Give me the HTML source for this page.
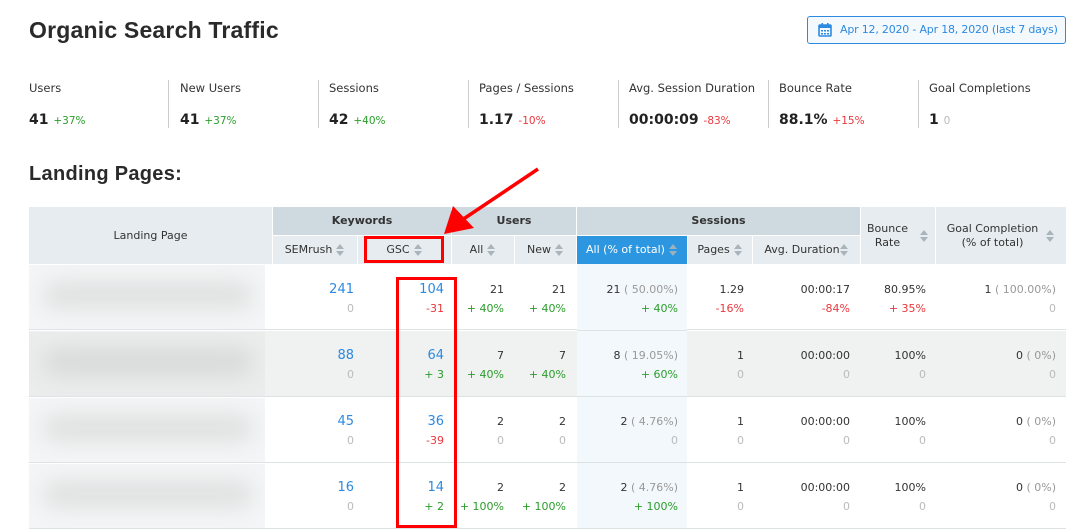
<!DOCTYPE html>
<html><head><meta charset="utf-8"><style>
*{margin:0;padding:0;box-sizing:border-box}
body{width:1076px;height:532px;background:#fff;font-family:"DejaVu Sans","Liberation Sans",sans-serif;color:#333;position:relative;overflow:hidden}
.a{position:absolute}
h1{position:absolute;left:29px;top:17px;font-family:"Liberation Sans",sans-serif;font-size:23px;font-weight:bold;color:#2a2a2a;letter-spacing:0.2px}
.btn{left:807px;top:16px;width:259px;height:28px;border:1px solid #2d8ae0;border-radius:3px;background:#f4f9fe;color:#2d8ae0;font-size:11px;line-height:26px;padding-left:32px;white-space:nowrap;letter-spacing:-0.2px}
.m{top:81px;height:47px;font-size:11.5px;color:#333}
.m .v{position:absolute;top:31px;font-size:14px;font-weight:bold;white-space:nowrap;color:#222}
.m .v span{font-size:10.5px;font-weight:normal}
.sep{top:80px;width:1px;height:48px;background:#ccc}
.g{color:#2a9d2a}.r{color:#e8383d}.z{color:#bbb}.b{color:#2d8ae0}
h2{position:absolute;left:29px;top:163px;font-family:"Liberation Sans",sans-serif;font-size:20px;font-weight:bold;color:#2a2a2a;letter-spacing:0.3px}
.h{background:#e6ecef;font-size:11px;color:#333;display:flex;align-items:center;justify-content:center;text-align:center;line-height:14px}
.h2{background:#cfd9e0;font-weight:bold}
.s{display:inline-block;width:9px;height:12px;margin-left:4px;vertical-align:middle;position:relative}
.s:before,.s:after{content:"";position:absolute;left:0;border-left:4.5px solid transparent;border-right:4.5px solid transparent}
.s:before{top:0;border-bottom:5px solid #a9b4bb}.s:after{bottom:0;border-top:5px solid #a9b4bb}
.row{left:29px;width:1037px;height:66px;border-bottom:1px solid #dde2e5}
.c{font-size:11px;text-align:right;line-height:19px}
.blur{left:29px;width:236px;height:64px;background:#f4f5f6;overflow:hidden}
.blur i{position:absolute;left:14px;top:16px;width:210px;height:28px;background:#e0e1e1;border-radius:14px;filter:blur(10px)}
</style></head><body>
<h1>Organic Search Traffic</h1>
<div class="a btn"><svg class="a" style="left:10px;top:6px" width="14" height="14" viewBox="0 0 14 14"><rect x="1" y="2" width="12" height="11" rx="1" fill="none" stroke="#2d8ae0" stroke-width="1.6"/><rect x="1" y="2" width="12" height="3" fill="#2d8ae0"/><rect x="3.5" y="0" width="1.6" height="3" fill="#2d8ae0"/><rect x="9" y="0" width="1.6" height="3" fill="#2d8ae0"/><g fill="#2d8ae0"><rect x="3" y="7" width="2" height="1.5"/><rect x="6" y="7" width="2" height="1.5"/><rect x="9" y="7" width="2" height="1.5"/><rect x="3" y="10" width="2" height="1.5"/><rect x="6" y="10" width="2" height="1.5"/><rect x="9" y="10" width="2" height="1.5"/></g></svg>Apr 12, 2020 - Apr 18, 2020 (last 7 days)</div>

<div class="a m" style="left:29px">Users<div class="v">41 <span class="g">+37%</span></div></div>
<div class="a sep" style="left:168px"></div>
<div class="a m" style="left:180px">New Users<div class="v">41 <span class="g">+37%</span></div></div>
<div class="a sep" style="left:318px"></div>
<div class="a m" style="left:329px">Sessions<div class="v">42 <span class="g">+40%</span></div></div>
<div class="a sep" style="left:468px"></div>
<div class="a m" style="left:479px">Pages / Sessions<div class="v">1.17 <span class="r">-10%</span></div></div>
<div class="a sep" style="left:618px"></div>
<div class="a m" style="left:629px">Avg. Session Duration<div class="v">00:00:09 <span class="r">-83%</span></div></div>
<div class="a sep" style="left:768px"></div>
<div class="a m" style="left:779px">Bounce Rate<div class="v">88.1% <span class="r">+15%</span></div></div>
<div class="a sep" style="left:918px"></div>
<div class="a m" style="left:929px">Goal Completions<div class="v">1 <span class="z">0</span></div></div>

<h2>Landing Pages:</h2>

<div class="a h" style="left:29px;top:207px;width:243px;height:57px">Landing Page</div>
<div class="a h h2" style="left:273px;top:207px;width:178px;height:28px">Keywords</div>
<div class="a h h2" style="left:452px;top:207px;width:124px;height:28px">Users</div>
<div class="a h h2" style="left:577px;top:207px;width:283px;height:28px">Sessions</div>
<div class="a h" style="left:273px;top:236px;width:84px;height:28px">SEMrush<i class="s"></i></div>
<div class="a h" style="left:358px;top:236px;width:93px;height:28px">GSC<i class="s"></i></div>
<div class="a h" style="left:452px;top:236px;width:62px;height:28px">All<i class="s"></i></div>
<div class="a h" style="left:515px;top:236px;width:61px;height:28px">New<i class="s"></i></div>
<div class="a h" style="left:577px;top:236px;width:110px;height:28px;background:#2d96e0;color:#fff">All (% of total)<i class="s" style="opacity:.9"></i></div>
<div class="a h" style="left:688px;top:236px;width:64px;height:28px">Pages<i class="s"></i></div>
<div class="a h" style="left:753px;top:236px;width:107px;height:28px">Avg. Duration<i class="s" style="margin-left:0"></i></div>
<div class="a h" style="left:861px;top:207px;width:74px;height:57px">Bounce<br>Rate<i class="s" style="margin-left:12px"></i></div>
<div class="a h" style="left:936px;top:207px;width:130px;height:57px">Goal Completion<br>(% of total)<i class="s" style="margin-left:8px"></i></div>

<div class="a row" style="top:264px"></div>
<div class="a row" style="top:331px;background:#f0f1f1"></div>
<div class="a row" style="top:397px"></div>
<div class="a row" style="top:463px"></div>
<div class="a" style="left:577px;top:264px;width:110px;height:264px;background:#f3f8fc"></div>
<div class="a" style="left:577px;top:330px;width:110px;height:1px;background:#dde2e5"></div>
<div class="a" style="left:577px;top:396px;width:110px;height:1px;background:#dde2e5"></div>
<div class="a" style="left:577px;top:462px;width:110px;height:1px;background:#dde2e5"></div>
<div class="a blur" style="top:265px"><i></i></div>
<div class="a blur" style="top:332px;background:#ebecec"><i style="background:#d9dada"></i></div>
<div class="a blur" style="top:398px"><i></i></div>
<div class="a blur" style="top:464px"><i></i></div>

<div class="a c" style="right:722px;top:280px"><div class="b" style="font-size:13px">241</div><div class="z">0</div></div>
<div class="a c" style="right:632px;top:280px"><div class="b" style="font-size:13px">104</div><div class="r">-31</div></div>
<div class="a c" style="right:572px;top:280px"><div>21</div><div class="g">+ 40%</div></div>
<div class="a c" style="right:510px;top:280px"><div>21</div><div class="g">+ 40%</div></div>
<div class="a c" style="right:398px;top:280px"><div>21 <span style="color:#999">( 50.00%)</span></div><div class="g">+ 40%</div></div>
<div class="a c" style="right:332px;top:280px"><div>1.29</div><div class="r">-16%</div></div>
<div class="a c" style="right:226px;top:280px"><div>00:00:17</div><div class="r">-84%</div></div>
<div class="a c" style="right:150px;top:280px"><div>80.95%</div><div class="r">+ 35%</div></div>
<div class="a c" style="right:20px;top:280px"><div>1 <span style="color:#999">( 100.00%)</span></div><div class="z">0</div></div>

<div class="a c" style="right:722px;top:346px"><div class="b" style="font-size:13px">88</div><div class="z">0</div></div>
<div class="a c" style="right:632px;top:346px"><div class="b" style="font-size:13px">64</div><div class="g">+ 3</div></div>
<div class="a c" style="right:572px;top:346px"><div>7</div><div class="g">+ 40%</div></div>
<div class="a c" style="right:510px;top:346px"><div>7</div><div class="g">+ 40%</div></div>
<div class="a c" style="right:398px;top:346px"><div>8 <span style="color:#999">( 19.05%)</span></div><div class="g">+ 60%</div></div>
<div class="a c" style="right:332px;top:346px"><div>1</div><div class="z">0</div></div>
<div class="a c" style="right:226px;top:346px"><div>00:00:00</div><div class="z">0</div></div>
<div class="a c" style="right:150px;top:346px"><div>100%</div><div class="z">0</div></div>
<div class="a c" style="right:20px;top:346px"><div>0 <span style="color:#999">( 0%)</span></div><div class="z">0</div></div>

<div class="a c" style="right:722px;top:412px"><div class="b" style="font-size:13px">45</div><div class="z">0</div></div>
<div class="a c" style="right:632px;top:412px"><div class="b" style="font-size:13px">36</div><div class="r">-39</div></div>
<div class="a c" style="right:572px;top:412px"><div>2</div><div class="z">0</div></div>
<div class="a c" style="right:510px;top:412px"><div>2</div><div class="z">0</div></div>
<div class="a c" style="right:398px;top:412px"><div>2 <span style="color:#999">( 4.76%)</span></div><div class="z">0</div></div>
<div class="a c" style="right:332px;top:412px"><div>1</div><div class="z">0</div></div>
<div class="a c" style="right:226px;top:412px"><div>00:00:00</div><div class="z">0</div></div>
<div class="a c" style="right:150px;top:412px"><div>100%</div><div class="z">0</div></div>
<div class="a c" style="right:20px;top:412px"><div>0 <span style="color:#999">( 0%)</span></div><div class="z">0</div></div>

<div class="a c" style="right:722px;top:478px"><div class="b" style="font-size:13px">16</div><div class="z">0</div></div>
<div class="a c" style="right:632px;top:478px"><div class="b" style="font-size:13px">14</div><div class="g">+ 2</div></div>
<div class="a c" style="right:572px;top:478px"><div>2</div><div class="g">+ 100%</div></div>
<div class="a c" style="right:510px;top:478px"><div>2</div><div class="g">+ 100%</div></div>
<div class="a c" style="right:398px;top:478px"><div>2 <span style="color:#999">( 4.76%)</span></div><div class="g">+ 100%</div></div>
<div class="a c" style="right:332px;top:478px"><div>1</div><div class="z">0</div></div>
<div class="a c" style="right:226px;top:478px"><div>00:00:00</div><div class="z">0</div></div>
<div class="a c" style="right:150px;top:478px"><div>100%</div><div class="z">0</div></div>
<div class="a c" style="right:20px;top:478px"><div>0 <span style="color:#999">( 0%)</span></div><div class="z">0</div></div>

<div class="a" style="left:364px;top:236px;width:80px;height:27px;border:3px solid #f00"></div>
<div class="a" style="left:396px;top:277px;width:61px;height:251px;border:3px solid #f00"></div>
<svg class="a" style="left:0;top:0" width="1076" height="532"><line x1="538" y1="169" x2="462" y2="220" stroke="#f00" stroke-width="3.5"/><polygon points="444,234 453,206 474,228" fill="#f00"/></svg>
</body></html>
